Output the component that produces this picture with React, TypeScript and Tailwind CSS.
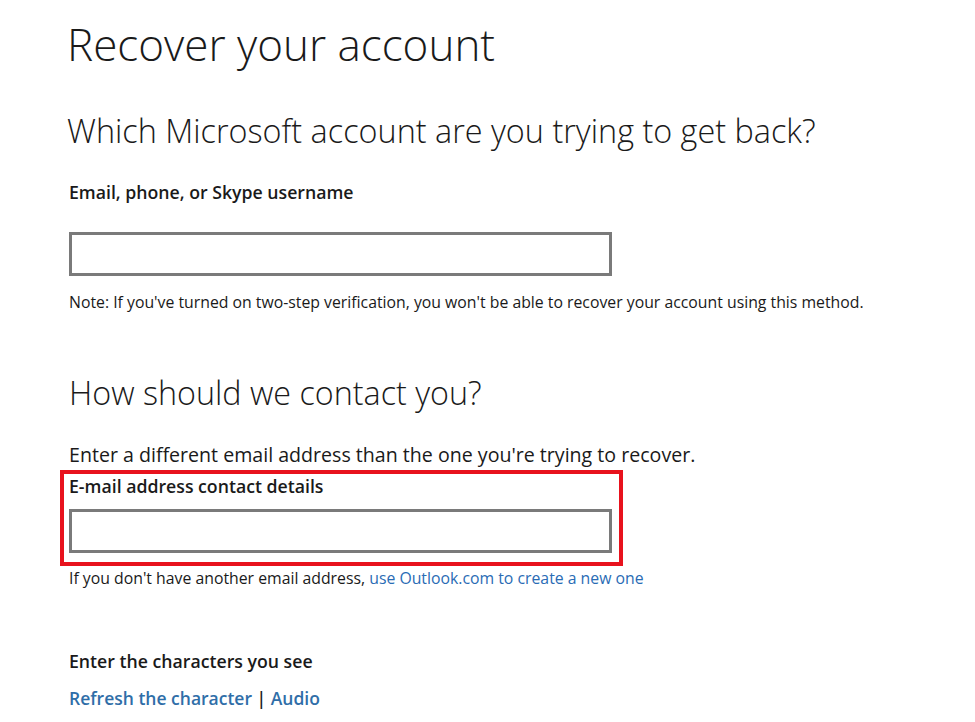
export default function App() {
  return (
    <div
      className="min-h-[722px] bg-white pl-[67px] text-[#1a1a1a]"
      style={{ fontFamily: '"Open Sans", "Noto Sans", sans-serif' }}
    >
      <h1 className="pt-[16px] text-[44px] font-light leading-[56px]">Recover your account</h1>
      <h2 className="mt-[38px] text-[32.4px] font-light leading-[40px]">
        Which Microsoft account are you trying to get back?
      </h2>

      <div className="pl-[2px]">
        <label className="mt-[31px] block text-[17.7px] font-semibold leading-[22px]">
          Email, phone, or Skype username
        </label>
        <input
          type="text"
          className="mt-[29px] block h-[44px] w-[543px] border-[3px] border-[#7a7a7a] bg-white outline-none"
        />
        <p className="mt-[16px] text-[15.8px] leading-[20px]">
          Note: If you've turned on two-step verification, you won't be able to recover your account using this method.
        </p>

        <h2 className="mt-[60px] text-[32.3px] font-light leading-[40px]">How should we contact you?</h2>
        <p className="mt-[30px] text-[19.6px] leading-[26px]">
          Enter a different email address than the one you're trying to recover.
        </p>

        <div className="-ml-[9px] mt-[2px] w-[563px] border-4 border-[#e8121d] pb-[9px] pl-[5px] pt-[1px]">
          <label className="block text-[17.7px] font-semibold leading-[22px]">E-mail address contact details</label>
          <input
            type="text"
            className="mt-[12px] block h-[44px] w-[543px] border-[3px] border-[#7a7a7a] bg-white outline-none"
          />
        </div>
        <p className="mt-[2px] text-[15.8px] leading-[20px]">
          If you don't have another email address,{' '}
          <a href="#" className="text-[#2a6cb5]">
            use Outlook.com to create a new one
          </a>
        </p>

        <label className="mt-[62px] block text-[17.7px] font-semibold leading-[22px]">
          Enter the characters you see
        </label>
        <p className="mt-[14px] text-[17.5px] font-semibold leading-[24px]">
          <a href="#" className="text-[#2f6ea8]">
            Refresh the character
          </a>{' '}
          <span className="text-[#1a1a1a]">|</span>{' '}
          <a href="#" className="text-[#2f6ea8]">
            Audio
          </a>
        </p>
      </div>
    </div>
  )
}
